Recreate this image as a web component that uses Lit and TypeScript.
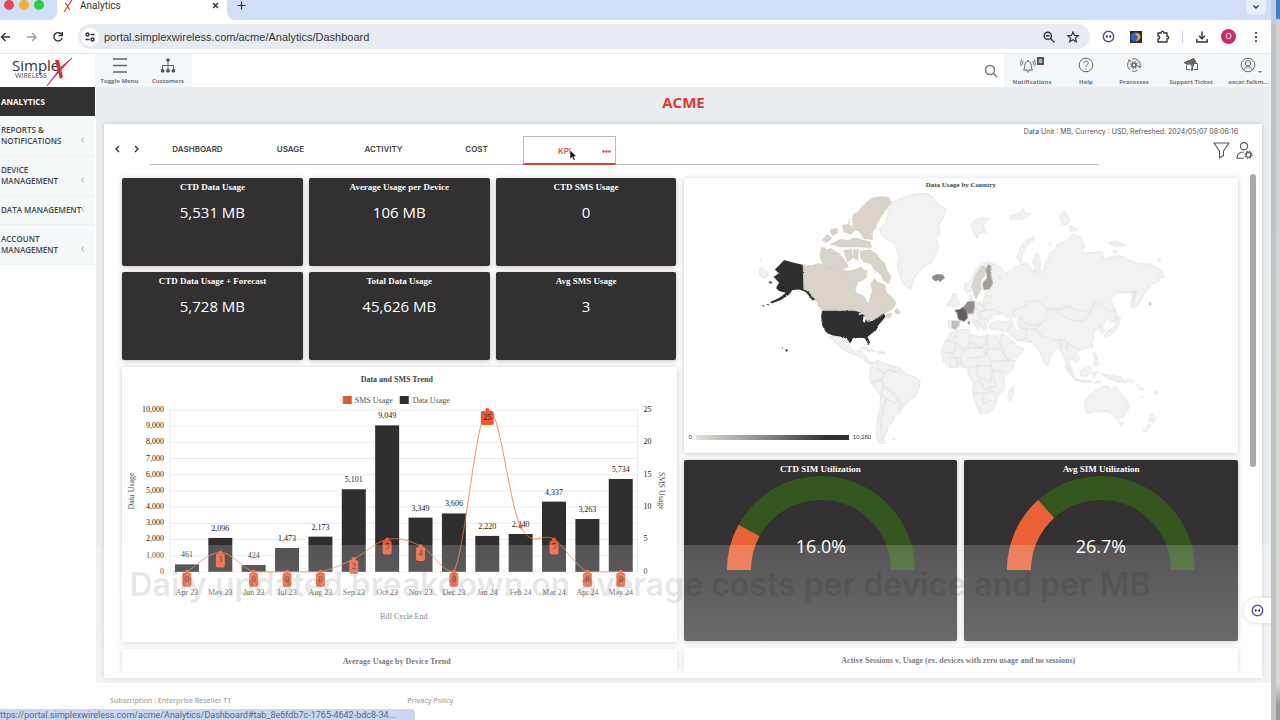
import { LitElement, html, svg, css, TemplateResult } from "lit";
import { customElement, property } from "lit/decorators.js";

interface Cycle {
  label: string;
  data: number;
  sms: number;
  tag: string;
}

const CYCLES: Cycle[] = [
  { label: "Apr 23", data: 461, sms: 0, tag: "0" },
  { label: "May 23", data: 2096, sms: 3, tag: "3" },
  { label: "Jun 23", data: 424, sms: 0, tag: "0" },
  { label: "Jul 23", data: 1473, sms: 0, tag: "0" },
  { label: "Aug 23", data: 2173, sms: 0, tag: "0" },
  { label: "Sep 23", data: 5101, sms: 2, tag: "2" },
  { label: "Oct 23", data: 9049, sms: 5, tag: "5" },
  { label: "Nov 23", data: 3349, sms: 4, tag: "4" },
  { label: "Dec 23", data: 3606, sms: 0, tag: "0" },
  { label: "Jan 24", data: 2220, sms: 25, tag: "25" },
  { label: "Feb 24", data: 2340, sms: 7, tag: "" },
  { label: "Mar 24", data: 4337, sms: 5, tag: "5" },
  { label: "Apr 24", data: 3263, sms: 0, tag: "0" },
  { label: "May 24", data: 5734, sms: 0, tag: "0" },
];

const fmt = (n: number) => n.toLocaleString("en-US");

@customElement("trend-chart")
export class TrendChart extends LitElement {
  static styles = css`
    :host { display: block; }
    svg { display: block; width: 100%; height: auto; }
    text { font-family: "Liberation Serif", serif; font-size: 8px; fill: #222; }
    .soft { fill: #555; }
    .mid { text-anchor: middle; }
    .end { text-anchor: end; }
    .grid { stroke: #ebebeb; stroke-width: 1; }
    .bar { fill: #2f2d2e; }
    .line { fill: none; stroke: #e8764f; stroke-width: 1; stroke-opacity: 0.8; }
    .tag { fill: #e9592f; }
  `;

  private x(i: number) { return 65 + i * 33.4; }
  private y(v: number) { return 182 - v * 0.0162; }

  private curve() {
    const p = CYCLES.map((c, i) => [this.x(i), this.y(c.sms * 400)]);
    let d = `M${p[0][0]},${p[0][1]}`;
    for (let i = 0; i < p.length - 1; i++) {
      const a = p[Math.max(i - 1, 0)];
      const b = p[i];
      const c = p[i + 1];
      const e = p[Math.min(i + 2, p.length - 1)];
      const t = 0.18;
      const y1 = Math.min(182, b[1] + (c[1] - a[1]) * t);
      const y2 = Math.min(182, c[1] - (e[1] - b[1]) * t);
      d += ` C${b[0] + (c[0] - a[0]) * t},${y1} ${c[0] - (e[0] - b[0]) * t},${y2} ${c[0]},${c[1]}`;
    }
    return d;
  }

  render() {
    const ticks = Array.from({ length: 11 }, (_, i) => i * 1000);
    return html`<svg viewBox="0 -3 555 255" role="img" aria-label="Data and SMS Trend">
      <rect class="tag" x="221" y="6" width="9" height="8"></rect>
      <text class="soft" x="233" y="13">SMS Usage</text>
      <rect class="bar" x="278" y="6" width="9" height="8"></rect>
      <text class="soft" x="291" y="13">Data Usage</text>
      ${ticks.map((t) => svg`
        <line class="grid" x1="48" x2="516" y1=${this.y(t)} y2=${this.y(t)}></line>
        <text class="end" x="42" y=${this.y(t) + 2}>${fmt(t)}</text>`)}
      <line class="grid" x1="48" x2="48" y1="20" y2="182"></line>
      <line class="grid" x1="516" x2="516" y1="20" y2="182"></line>
      ${[0, 5, 10, 15, 20, 25].map((t) => svg`<text x="522" y=${this.y(t * 400) + 2}>${t}</text>`)}
      <text class="soft mid" transform="translate(12 101) rotate(-90)">Data Usage</text>
      <text class="soft mid" transform="translate(537 101) rotate(90)">SMS Usage</text>
      ${CYCLES.map((c, i) => svg`
        <rect class="bar" x=${this.x(i) - 12} y=${this.y(c.data)} width="24" height=${182 - this.y(c.data)}></rect>
        <text class="mid" x=${this.x(i)} y=${this.y(c.data) - 7}>${fmt(c.data)}</text>
        <text class="soft mid" x=${this.x(i)} y="205">${c.label}</text>`)}
      <path class="line" d=${this.curve()}></path>
      ${CYCLES.map((c, i) => {
        const w = c.tag.length > 1 ? 13 : 9;
        const x = this.x(i);
        const y = this.y(c.sms * 400);
        return c.tag
          ? svg`<circle class="tag" cx=${x} cy=${y} r="2"></circle>
              <rect class="tag" x=${x - w / 2} y=${y + 1} width=${w} height="14" rx="2"></rect>
              <text class="mid" x=${x} y=${y + 10}>${c.tag}</text>`
          : svg`<circle class="tag" cx=${x} cy=${y} r="2"></circle>`;
      })}
      <text class="soft mid" x="282" y="229">Bill Cycle End</text>
    </svg>`;
  }
}

@customElement("gauge-arc")
export class GaugeArc extends LitElement {
  @property({ type: Number }) value = 0;

  static styles = css`
    :host { display: block; }
    svg { display: block; width: 100%; height: auto; overflow: visible; }
    .rest { fill: none; stroke: #33561f; stroke-width: 24; }
    .part { fill: none; stroke: #ea6236; stroke-width: 24; }
    text { font-family: "Open Sans", sans-serif; font-size: 18px; fill: #fff; text-anchor: middle; }
  `;

  render() {
    const a = (this.value / 100) * Math.PI;
    const x = 137 - 82 * Math.cos(a);
    const y = 94 - 82 * Math.sin(a);
    return html`<svg viewBox="0 2 274 94" role="img" aria-label="Utilization gauge">
      <path class="rest" d="M55,94 A82,82 0 0 1 219,94"></path>
      <path class="part" d="M55,94 A82,82 0 0 1 ${x},${y}"></path>
      <text x="137" y="77">${this.value.toFixed(1)}%</text>
    </svg>`;
  }
}

@customElement("world-map")
export class WorldMap extends LitElement {
  static styles = css`
    :host { display: block; }
    svg { display: block; width: 100%; height: auto; }
    .land { fill: #f2f2f2; stroke: #d9d9d9; stroke-width: 2; stroke-linejoin: round; }
    .edge { fill: none; stroke: #dadada; stroke-width: 2; }
    .low { fill: #d9d3ca; stroke: #c9c3ba; stroke-width: 2; }
    .top { fill: #2f2d2e; }
    .fr { fill: #5f5c5b; }
    .de { fill: #908c89; }
    .fi { fill: #a29d98; }
    .es { fill: #c3beb8; }
    .sea { fill: #fff; }
  `;

  render() {
    return html`<svg viewBox="0 51 1662 783" role="img" aria-label="Data usage by country">
      <defs>
        <filter id="coast" x="0" y="0" width="100%" height="100%">
          <feTurbulence type="fractalNoise" baseFrequency="0.07" numOctaves="2" seed="4"></feTurbulence>
          <feDisplacementMap in="SourceGraphic" scale="7" xChannelSelector="R" yChannelSelector="G"></feDisplacementMap>
        </filter>
      </defs>
      <g filter="url(#coast)">
        <path class="land" d="M622,80L650,68L672,60L700,52L735,54L750,68L760,85L784,98L778,125L762,150L768,170L758,190L762,215L752,240L740,262L715,275L700,290L688,310L680,338L665,332L652,312L645,290L640,265L645,240L632,205L610,190L592,178L585,158L605,140L612,110Z"></path>
        <path class="low" d="M520,110L535,90L560,68L590,62L612,64L620,78L608,98L592,118L578,140L575,155L565,165L562,190L540,188L530,170L512,160L505,135L508,115Z
          M412,215L440,218L462,232L480,250L492,272L470,280L440,276L415,262L408,238Z
          M480,224L502,220L504,246L490,256Z M508,222L523,220L520,252L508,244Z
          M528,225L560,222L580,240L600,260L608,285L620,300L612,322L598,312L590,295L572,282L560,262L540,258L530,245Z
          M415,192L430,176L442,186L425,200Z M438,165L455,155L460,170L445,178Z
          M475,148L495,145L512,162L500,174L480,168Z M492,130L498,140L494,142Z
          M440,204L470,190L490,194L510,186L558,198L560,214L520,212L470,212Z
          M358,270L385,268L405,262L430,272L455,282L490,285L510,282L530,272L545,285L545,305L520,320L512,340L520,352L540,362L552,385L558,368L565,345L560,320L572,308L580,320L600,325L606,350L622,362L635,380L625,398L604,410L580,425L560,432L550,440L540,425L520,408L500,404L415,404L405,390L392,368L378,350L358,340Z
          M630,405L640,396L648,410L638,414Z M606,415L622,412L618,424L608,424Z"></path>
        <path class="top" d="M414,404L512,404L530,410L540,418L550,438L565,434L580,426L596,412L604,422L592,436L582,448L575,462L560,474L550,482L558,500L552,504L542,486L520,484L505,490L498,502L488,488L470,482L445,478L425,468L414,448L411,420Z
          M300,252L330,260L356,266L358,340L372,346L392,368L388,376L365,348L345,340L325,342L315,355L290,372L262,382L262,378L290,362L305,350L285,345L275,335L285,320L268,302L285,292L272,280L290,262Z
          M252,315L265,318L260,324Z M232,389L240,387L240,391Z M246,386L254,383L254,388Z M304,518L312,522L306,528Z M294,514L298,516L295,518Z"></path>
        <path class="sea" d="M538,420L546,424L542,440L536,436Z M522,412L536,410L530,416Z"></path>
        <path class="land" d="M436,480L450,480L472,484L488,492L496,506L500,520L515,528L530,520L534,532L545,540L552,555L565,562L555,562L540,552L520,538L500,532L475,520L460,505L448,495Z
          M530,514L560,519L575,526L550,523Z M580,524L602,530L585,531Z
          M565,560L580,552L600,562L625,568L650,578L665,595L690,602L708,612L704,635L692,662L672,675L658,692L645,712L632,718L628,735L612,748L605,770L598,790L608,806L590,804L578,788L575,760L582,720L588,690L590,655L575,640L555,612L558,590Z
          M624,788L632,788L628,792Z M228,274L250,288L252,300L240,306L226,298Z M229,248L233,252L229,253Z"></path>
        <path class="edge" d="M578,556L582,580L600,590L615,582L618,568M628,570L630,590M645,578L642,590M600,590L590,612L575,612L562,620M590,612L600,632L618,642L634,660L640,674L628,680L606,668L598,690L590,740L592,792M634,660L650,680L640,700L655,694M596,632L592,655L606,668M615,582L642,590"></path>
        <path class="de" d="M745,300L758,294L775,295L782,305L768,317L750,314Z"></path>
        <path class="land" d="M800,375L806,352L814,352L820,372L828,384L815,392L802,390L806,382Z M790,376L798,372L798,388L788,388Z M792,432L800,432L802,456L794,456Z"></path>
        <g transform="translate(828 0)">
          <path class="land" d="M95,262L115,270L130,285L120,304L110,298L122,310L135,290L150,284L175,268L195,262L215,278L228,292L218,252L232,228L240,250L238,290L250,285L256,250L268,262L266,232L285,222L290,205L320,195L340,172L360,185L372,210L362,232L390,230L425,228L430,250L470,238L495,245L530,262L570,265L592,275L612,300L606,308L592,298L596,314L575,325L555,348L535,384L515,396L512,375L528,345L500,350L470,350L448,372L464,395L470,412L465,432L450,438L438,430L425,452L434,462L424,472L414,455L400,462L398,490L392,510L365,520L350,525L345,530L358,548L345,560L330,545L325,560L337,588L322,575L312,545L300,520L290,515L270,540L262,568L252,562L235,520L215,498L190,495L170,492L150,478L140,466L115,460L88,456L90,442L115,434L146,438L150,428L128,412L98,416L90,430L80,440L78,462L68,456L60,442L44,432L62,450L54,462L38,438L20,432L20,414L42,410L45,380L68,378L75,350L95,342L92,300Z
            M118,478L130,475L160,495L168,508L192,518L175,540L140,553L130,525L120,500Z
            M-58,525L-45,495L-30,470L-10,462L25,460L30,475L60,482L78,478L110,480L120,510L130,530L145,554L165,552L158,575L130,605L132,640L110,660L105,690L85,710L60,712L50,690L38,655L40,620L25,600L22,578L5,570L-30,576L-50,555Z
            M148,640L158,630L161,650L150,676L142,665Z
            M14,325L30,315L45,285L62,262L85,255L95,262L80,266L65,272L50,290L38,320L34,345L20,350L12,340Z
            M26,358L36,356L34,374L26,372Z
            M430,480L445,462L462,455L468,430L464,418L480,425L473,450L460,468L436,484Z M516,346L528,348L524,362L516,380Z
            M398,530L406,532L415,565L400,568L405,550Z M360,585L385,568L394,580L380,600L362,600Z M312,568L335,588L348,610L335,602Z M345,610L395,616L372,618L348,613Z M395,590L410,586L400,606Z M400,618L420,616L410,620Z M425,592L450,598L480,602L500,620L470,616L440,606Z M498,608L520,618L512,620Z M528,626L550,640L545,642Z M582,648L592,646L588,654Z M540,658L550,662L546,664Z
            M372,675L385,660L405,645L425,632L440,628L452,645L465,630L474,640L482,655L500,672L505,695L490,722L470,728L450,708L430,705L400,706L380,712L375,695Z M475,738L488,738L482,750Z
            M572,712L586,725L578,740L565,735Z M548,765L565,742L572,748L556,768Z
            M32,140L60,125L88,128L68,145L76,170L58,172L50,186L40,170Z M148,120L180,110L188,98L194,112L210,115L185,130L150,128Z M298,118L312,108L328,130L322,145L305,145Z M328,148L350,162L330,165Z M222,183L195,195L180,215L170,245L182,262L185,235L200,208L222,190Z M445,202L465,195L495,208L470,210Z M460,222L472,228L462,232Z M590,250L600,248L598,254Z M268,200L272,206L266,206Z M394,505L398,512L394,516Z"></path>
          <path class="edge" d="M155,402L165,425L185,430L200,448L230,445L245,440L262,420L262,396L232,374L195,378L198,392L155,402M262,396L300,400L318,390L345,402L392,406L372,434L335,434L295,412L290,402M392,406L400,382L420,384L440,402L465,405M245,440L228,460L245,480L280,492L302,490L320,500L318,520M170,430L178,455L200,460L228,460M140,466L155,440L178,455L200,460L196,485L170,492M196,485L215,498M320,500L345,515L360,520M300,520L302,490M120,460L130,475M48,380L70,390L90,375M42,395L60,405L95,400L125,412M60,405L55,425L90,430M70,390L72,405M75,360L95,358M408,445L425,452"></path>
          <path class="edge" d="M-30,505L-45,520L-55,522M-45,495L-15,498L10,520L25,515L30,475M-15,498L-18,530L-45,530M10,520L0,545L-20,545L-18,530M0,545L5,570M25,515L68,515L78,535L82,500L78,480M30,500L68,515M22,545L50,545L78,535L95,555L145,554M22,578L50,568L92,570L95,555M50,568L52,600L92,618L96,580L130,590M40,620L60,615L70,640L105,630L100,600M38,650L85,652L90,640L108,655M68,655L70,682L90,672L102,680M60,712L55,690M68,515L78,480M-10,462L-12,480L-42,495M82,518L120,518M-30,530L-30,576M-10,545L-8,572"></path>
          <path class="low" d="M40,350L38,320L50,290L65,272L76,274L72,300L60,315L62,340L46,368Z"></path>
          <path class="fi" d="M82,265L92,268L92,300L98,320L88,340L70,342L66,322L80,305L76,280Z"></path>
          <path class="fr" d="M-18,402L-2,400L8,392L20,404L22,425L10,437L-6,430L-10,412Z"></path>
          <path class="de" d="M12,388L24,376L42,374L43,392L38,413L24,412L10,396Z"></path>
          <path class="es" d="M-26,433L0,435L-4,450L-16,461L-26,456Z"></path>
          <path class="sea" d="M156,422L172,424L168,440L180,462L165,458L158,438Z"></path>
          <path class="fr" d="M24,436L28,436L27,446L24,446Z M566,382L572,384L568,388Z"></path>
        </g>
      </g>
    </svg>`;
  }
}

const ico = (w: number, box: string, body: TemplateResult | unknown) =>
  html`<svg class="ico" width=${w} viewBox=${box} aria-hidden="true">${body}</svg>`;

const face = ico(13, "0 0 13 13", svg`<circle cx="6.5" cy="6.5" r="5.2" fill="#fff" stroke="#5b4fb5" stroke-width="1.5"/><ellipse cx="4.8" cy="6.5" rx=".9" ry="1.2" fill="#222" stroke="none"/><ellipse cx="8.2" cy="6.5" rx=".9" ry="1.2" fill="#222" stroke="none"/>`);

@customElement("app-root")
export class AppRoot extends LitElement {
  static styles = css`
    :host { display: block; font-family: "Open Sans", sans-serif; color: #444; }
    * { box-sizing: border-box; }
    button { border: 0; padding: 0; background: none; font: inherit; color: inherit; cursor: pointer; }
    a { color: inherit; text-decoration: none; }
    h1, h2, h3, p { margin: 0; }
    .ico { display: block; flex: none; overflow: visible; fill: none; stroke: #333; stroke-width: 1.4; }
    .desktop { height: 100vh; display: grid; grid-template-columns: 1fr 5px 4px; overflow: hidden; }
    .behind { background: linear-gradient(#c3cfdd 0 18px, #c2c3c5 30px); }
    .far { background: linear-gradient(#3f7fc4 0 18px, #cfd1d2 20px 80px, #d8d8d4 60% 95%, #999 98%); }
    .window { display: flex; flex-direction: column; min-width: 0; background: #fff; position: relative; overflow: hidden; }

    .strip { display: flex; height: 20px; background: #cfdff9; flex: none; }
    .lead { background: #fff; }
    .lights { display: flex; gap: 5px; width: 57px; height: 20px; padding-left: 4px; background: #cfdff9; border-radius: 0 0 8px 0; }
    .light { width: 10px; height: 10px; border-radius: 50%; background: #ee4256; }
    .light.y { background: #f2b32e; }
    .light.g { background: #27ce40; }
    .tab { width: 170px; background: #fff; display: flex; align-items: center; gap: 7px; padding: 0 8px 9px 6px; font: 10px/11px Roboto, sans-serif; color: #333; }
    .tab span { flex: 1; }
    .rest { flex: 1; display: flex; background: #fff; }
    .fill { flex: 1; display: flex; justify-content: space-between; padding: 0 5px 5px 10px; background: #cfdff9; border-radius: 0 0 0 8px; }
    .fill button { align-self: start; }
    .chev { width: 20px; height: 15px; display: grid; place-items: center; border-radius: 0 0 5px 5px; background: #e7effc; }

    .bar { display: flex; align-items: center; height: 34px; padding-right: 2px; border-bottom: 1px solid #e3e6e9; flex: none; }
    .nav { display: grid; grid-template-columns: 19px 26px 33px; align-items: center; }
    .nav button:not(:first-child) { padding-left: 7px; }
    .omni { flex: 1; display: flex; align-items: center; height: 25px; border-radius: 13px; background: #e7ebf3; padding: 0 11px 0 3px; gap: 12px; }
    .site { width: 18px; height: 18px; border-radius: 50%; background: #fff; display: grid; place-items: center; }
    .omni input { flex: 1; min-width: 0; margin-left: -7px; padding: 0; border: 0; background: none; outline: 0; font: 11px/16px "Liberation Sans", sans-serif; color: #33363b; }
    .tools { display: grid; grid-template-columns: 27px 27px 27px 12px 27px 27px 27px; padding-left: 5px; justify-items: center; align-items: center; }
    .sep { width: 1px; height: 12px; background: #c9d3e4; }
    .me { width: 15px; height: 15px; border-radius: 50%; background: #d0266b; color: #fff; font: 8px/15px Inter, sans-serif; text-align: center; }

    .head { display: flex; height: 33px; flex: none; background: #fff; }
    .brand { width: 95px; padding: 1px 0 0 12px; }
    .brand svg { display: block; }
    .word { font: 15px "Open Sans", sans-serif; fill: #333; }
    .sub { font: 7px "Open Sans", sans-serif; fill: #444; }
    .left { display: grid; grid-template-columns: 49px 48px; background: #f4f7f9; }
    .right { display: grid; grid-template-columns: 56px 52px 44px 70px 45px; background: #f4f7f9; }
    .item { display: flex; flex-direction: column; align-items: center; justify-content: space-between; padding: 3px 0 2px; font: 700 6px/8px "Open Sans", sans-serif; color: #777; white-space: nowrap; position: relative; }
    .item .ico { stroke: #666; stroke-width: 1; }
    .right .item { padding-bottom: 1px; }
    .count { position: absolute; left: 33px; top: 3px; width: 7px; height: 8px; background: #555; color: #fff; font: 700 5px/8px "Open Sans", sans-serif; text-align: center; }
    .caret { position: absolute; right: 9px; top: 17px; border: 2px solid transparent; border-top-color: #777; border-bottom: 0; }
    .find { margin-left: auto; padding: 0 6px; }
    .find .ico { stroke: #777; }

    .body { flex: 1; display: flex; min-height: 0; }
    .side { width: 95px; flex: none; display: flex; flex-direction: column; }
    .side a { display: flex; align-items: center; justify-content: space-between; padding: 8px 11px 9px 1px; font: 600 8px/11px "Open Sans", sans-serif; color: #444; background: #f6f9fa; border-bottom: 1px solid #eef2f4; white-space: nowrap; }
    .side a.on { height: 29px; background: #323031; color: #fff; border: 0; font-weight: 700; }
    .side .ico { align-self: end; margin-bottom: 3px; }
    .page { flex: 1; min-width: 0; display: flex; flex-direction: column; margin-left: 1px; background: #ebeef1; }
    .name { padding: 3px 0 10px; font: 700 15px/24px "Open Sans", sans-serif; color: #e0392e; text-align: center; }
    .panel { flex: 1; min-height: 0; display: flex; flex-direction: column; margin: 0 9px 5px 8px; padding-bottom: 7px; background: #fff; box-shadow: 0 0 4px rgba(0, 0, 0, 0.18); }
    .meta { padding: 3px 24px 0 0; text-align: right; font: 7px/9px Inter, sans-serif; color: #555; }
    .tabs { display: flex; padding: 0 9px 0 8px; height: 29px; }
    .step { width: 19px; display: grid; place-items: center start; padding: 0 0 3px 3px; }
    .list { flex: 1; display: flex; margin: 0 114px 0 0; padding-left: 1px; border-bottom: 1px solid #bbb; }
    .list button { width: 93px; font: 600 8px/10px Inter, sans-serif; color: #444; padding-bottom: 3px; }
    .list button.on { display: grid; grid-template-columns: 1fr auto; align-items: center; padding: 2px 4px 0 3px; border: 1px solid #bbb; border-bottom: 2px solid #d8433c; margin-bottom: -1px; color: #d8534d; }
    .acts { display: flex; gap: 6px; align-items: center; }
    .acts .ico { stroke: #555; stroke-width: 1.1; }

    .view { flex: 1; min-height: 0; display: flex; margin-top: 7px; padding: 0 6px 0 18px; gap: 12px; }
    .scroll { flex: 1; min-width: 0; overflow: hidden; margin: 0 -6px; padding: 6px; }
    .cols { display: grid; grid-template-columns: 1fr 1fr; gap: 7px; }
    .col { display: flex; flex-direction: column; gap: 7px; min-width: 0; }
    .kpis { display: grid; grid-template-columns: repeat(3, 1fr); gap: 6px; }
    .kpi, .gauge { background: #323031; color: #fff; border-radius: 2px; box-shadow: 0 1px 5px rgba(80, 60, 70, 0.35); text-align: center; }
    .kpi { height: 88px; }
    .kpi h3, .gauge h3 { font: 700 9px/18px "Liberation Serif", serif; }
    .kpi p { font: 15px/20px "Open Sans", sans-serif; padding-top: 6px; }
    .card { background: #fff; box-shadow: 0 1px 5px rgba(80, 60, 70, 0.3); }
    .card h3 { font: 700 8px/15px "Liberation Serif", serif; color: #444; text-align: center; padding-right: 5px; }
    .chart { padding-top: 5px; height: 275px; }
    .map { position: relative; height: 275px; overflow: hidden; }
    .map h3 { font-size: 7px; padding: 0; }
    .scale { position: absolute; left: 5px; bottom: 12px; display: flex; align-items: center; gap: 4px; font: 6px/8px "Liberation Sans", sans-serif; color: #333; }
    .ramp { width: 153px; height: 5px; background: linear-gradient(90deg, #e5dfd5, #8c8886 45%, #323031 85%); }
    .gauges { display: grid; grid-template-columns: 1fr 1fr; gap: 7px; }
    .gauge { height: 181px; }
    .next { height: 60px; padding-top: 5px; }
    .thumb { width: 6px; height: 293px; border-radius: 3px; background: #a9a9a9; margin: 2px 0 0; }
    .foot { display: flex; gap: 176px; height: 37px; padding: 13px 14px; background: #fff; font: 600 7px/9px "Open Sans", sans-serif; color: #777; }

    .caption { position: absolute; left: 0; right: 0; bottom: 0; height: 175px; padding: 16px 0 0 9px; background: linear-gradient(rgba(255, 255, 255, 0.18), rgba(255, 255, 255, 0.36)); font: 600 32px/48px Inter, sans-serif; color: rgba(0, 0, 0, 0.11); text-align: center; white-space: nowrap; pointer-events: none; }
    .status { position: absolute; left: 0; bottom: 0; height: 11px; width: 415px; border-radius: 0 4px 0 0; background: #c9d7f1; font: 9px/12px Roboto, sans-serif; color: #5d6780; white-space: nowrap; }
    .bot { position: absolute; right: 0; top: 598px; width: 27px; height: 25px; display: grid; place-items: center; background: #fff; border-radius: 12px 0 0 12px; box-shadow: 0 0 4px rgba(0, 0, 0, 0.15); }
    .cursor { position: absolute; left: 569px; top: 149px; }
  `;

  private kpi(title: string, value: string) {
    return html`<section class="kpi"><h3>${title}</h3><p>${value}</p></section>`;
  }

  private link(lines: string[]) {
    return html`<a href="#">
      <span>${lines.map((l, i) => (i ? html`<br />${l}` : l))}</span>
      ${ico(3, "0 0 3 6", svg`<path d="M2.5,.5L.7,3L2.5,5.5" stroke-width=".7" stroke="#888"/>`)}
    </a>`;
  }

  render() {
    return html`
      <div class="desktop">
        <div class="window">
          <div class="strip">
            <div class="lead"><div class="lights"><i class="light"></i><i class="light y"></i><i class="light g"></i></div></div>
            <div class="tab">${ico(10, "0 0 10 12", svg`<path d="M9,0L1,12M2,3C4,4 6,9 6.5,10" stroke="#d9403a" stroke-width="1.2"/>`)}<span>Analytics</span>
              <button aria-label="Close tab">${ico(7, "0 0 7 7", svg`<path d="M1,1L6,6M6,1L1,6"/>`)}</button></div>
            <div class="rest"><div class="fill">
              <button aria-label="New tab">${ico(9, "0 0 9 12", svg`<path d="M4.5,1.5V9.5M.5,5.5H8.5" stroke-width="1.2"/>`)}</button>
              <button class="chev" aria-label="Search tabs">${ico(8, "0 0 8 10", svg`<path d="M1.5,2.5L4,5L6.5,2.5"/>`)}</button>
            </div></div>
          </div>

          <div class="bar">
            <div class="nav">
              <button aria-label="Back">${ico(12, "0 0 12 12", svg`<path d="M10,6H2M5.5,2L1.5,6L5.5,10"/>`)}</button>
              <button aria-label="Forward">${ico(12, "0 0 12 12", svg`<path d="M1,6H9M6,2L10,6L6,10" stroke="#999"/>`)}</button>
              <button aria-label="Reload">${ico(12, "0 0 12 12", svg`<path d="M10,4.2A4.2,4.2 0 1 0 10.2,6.8M10.3,1V4.6H6.7"/>`)}</button>
            </div>
            <div class="omni">
              <span class="site">${ico(10, "0 0 10 10", svg`<path d="M5.5,2.5H9.5M.5,7.5H4.5"/><circle cx="2.5" cy="2.5" r="1.5"/><circle cx="7.5" cy="7.5" r="1.5"/>`)}</span>
              <input aria-label="Address" value="portal.simplexwireless.com/acme/Analytics/Dashboard" />
              <button aria-label="Zoom">${ico(12, "0 0 12 12", svg`<circle cx="4.8" cy="4.8" r="3.6"/><path d="M7.5,7.5L11.3,11.3M3,4.8H6.6"/>`)}</button>
              <button aria-label="Bookmark">${ico(12, "0 0 12 12", svg`<path d="M6,1L7.5,4.4L11.2,4.7L8.4,7.1L9.3,10.8L6,8.8L2.7,10.8L3.6,7.1L.8,4.7L4.5,4.4Z" stroke-width="1.2"/>`)}</button>
            </div>
            <div class="tools">
              <button aria-label="Assistant">${face}</button>
              <button aria-label="Extension">${ico(12, "0 0 12 12", svg`<rect width="12" height="12" fill="#2b2a25" stroke="none"/><circle cx="5" cy="6" r="4.5" fill="#2d62c8" stroke="none"/><path d="M5,3C8,0 12,4 10,8L6,11L8,6Z" fill="#e9a53a" stroke="none"/>`)}</button>
              <button aria-label="Extensions">${ico(14, "0 0 14 14", svg`<path d="M2,3H5.2C5.2,.8 8,.8 8,3H11V6.2C13.2,6.2 13.2,9 11,9V12H2V9C4.2,9 4.2,6 2,6Z" stroke-linejoin="round"/>`)}</button>
              <i class="sep"></i>
              <button aria-label="Downloads">${ico(12, "0 0 12 12", svg`<path d="M6,.5V7.5M3,4.8L6,7.8L9,4.8M.8,8V11H11.2V8"/>`)}</button>
              <button class="me" aria-label="Profile">O</button>
              <button aria-label="Menu">${ico(4, "0 0 4 12", svg`<path d="M2,1V2.8M2,5.1V6.9M2,9.2V11" stroke-width="1.8"/>`)}</button>
            </div>
          </div>

          <header class="head">
            <a class="brand" href="#" aria-label="Simplex Wireless">
              <svg width="62" height="31" viewBox="0 0 62 31">
                <text class="word" x="0" y="16">Simple</text>
                <text class="sub" x="3" y="23">WIRELESS</text>
                <path d="M60,3L46,18L35,31L49,12Z" fill="#d2323a" stroke="#d2323a" stroke-width=".8"/>
                <path d="M43,5L47,5L51,22L48,24Z" fill="#d2323a"/>
              </svg>
            </a>
            <div class="left">
              <button class="item">${ico(16, "0 0 16 16", svg`<path d="M1,2H15M1,8.5H15M1,15H15" stroke-width="1.3"/>`)}Toggle Menu</button>
              <button class="item">${ico(16, "0 0 16 16", svg`<path d="M8,4V12M2.5,12V8.5H13.5V12"/><g fill="#555" stroke="none"><circle cx="8" cy="3" r="1.8"/><rect x="1" y="12" width="3.4" height="3.4" rx="1"/><rect x="6.3" y="12" width="3.4" height="3.4" rx="1"/><rect x="11.6" y="12" width="3.4" height="3.4" rx="1"/></g>`)}Customers</button>
            </div>
            <button class="find" aria-label="Search">${ico(14, "0 0 14 14", svg`<circle cx="6" cy="6" r="4.5"/><path d="M9.3,9.3L13,13"/>`)}</button>
            <div class="right">
              <button class="item">${ico(16, "5 0 16 16", svg`<path d="M4.5,12H13.5C12,10.5 12.5,8 12,6C11.5,4 10,3.3 9,3.3C8,3.3 6.5,4 6,6C5.5,8 6,10.5 4.5,12ZM7.5,12.5C8,14.5 10,14.5 10.5,12.5M9,2V3.3M4.5,3C3.5,4 3.5,5.5 3.7,6.5M2.8,1.5C1.5,3.5 1.5,6 2.3,8M13.5,3C14.5,4 14.5,5.5 14.3,6.5M15.2,1.5C16.5,3.5 16.5,6 15.7,8" transform="translate(0 1)"/>`)}Notifications<i class="count">0</i></button>
              <button class="item">${ico(16, "0 0 16 16", svg`<circle cx="8" cy="8" r="6.8"/><path d="M5.8,6.2C5.8,3.3 10.2,3.3 10.2,6.2C10.2,7.8 8,8 8,10M8,11.3V12.3"/>`)}Help</button>
              <button class="item">${ico(16, "0 0 16 16", svg`<path d="M4,13A6.3,6.3 0 0 1 3.5,3.5M2,3.2L4,3L4.2,5.2M6.5,1.9A6.3,6.3 0 0 1 13.8,10.5M15.3,9.3L13.6,10.8L12.3,9M11.5,13.3A6.3,6.3 0 0 1 6,14"/><circle cx="8" cy="8" r="2" stroke-width="1.6"/><circle cx="8" cy="8" r="3.4" stroke-width="1.2" stroke-dasharray="1.3 1.37"/>`)}Processes</button>
              <button class="item">${ico(16, "0 0 16 16", svg`<path d="M1,5.5L11,1.5L13,5.5L4,7.5Z" fill="#666"/><path d="M3.5,8.5V12.5H7M10.5,12.5H14.5V6.5H8"/><path d="M7,6L9.5,9L8.8,14M10.5,7L9.5,9" stroke-width="1.8"/>`)}Support Ticket</button>
              <button class="item">${ico(16, "1 0 16 16", svg`<circle cx="8" cy="8" r="6.8"/><circle cx="8" cy="6.3" r="2.7"/><path d="M3.5,13C4,10.5 6,9.8 8,9.8C10,9.8 12,10.5 12.5,13"/>`)}oscar.falkm...<i class="caret"></i></button>
            </div>
          </header>

          <div class="body">
            <nav class="side">
              <a class="on" href="#">ANALYTICS</a>
              ${this.link(["REPORTS &", "NOTIFICATIONS"])}
              ${this.link(["DEVICE", "MANAGEMENT"])}
              ${this.link(["DATA MANAGEMENT"])}
              ${this.link(["ACCOUNT", "MANAGEMENT"])}
            </nav>
            <main class="page">
              <h1 class="name">ACME</h1>
              <div class="panel">
                <p class="meta">Data Unit : MB, Currency : USD, Refreshed: 2024/05/07 08:06:16</p>
                <div class="tabs">
                  <button class="step" aria-label="Previous">${ico(5, "0 0 5 8", svg`<path d="M4,1L1,4L4,7"/>`)}</button>
                  <button class="step" aria-label="Next">${ico(5, "0 0 5 8", svg`<path d="M1,1L4,4L1,7"/>`)}</button>
                  <div class="list" role="tablist">
                    <button role="tab">DASHBOARD</button>
                    <button role="tab">USAGE</button>
                    <button role="tab">ACTIVITY</button>
                    <button role="tab">COST</button>
                    <button role="tab" class="on" aria-selected="true"><span>KPI</span>${ico(9, "0 0 9 3", svg`<g fill="#d8433c" stroke="none"><circle cx="1.5" cy="1.5" r="1.2"/><circle cx="4.5" cy="1.5" r="1.2"/><circle cx="7.5" cy="1.5" r="1.2"/></g>`)}</button>
                  </div>
                  <div class="acts">
                    <button aria-label="Filter">${ico(17, "0 0 17 17", svg`<path d="M1,1H16L10.5,9V13.5L6.5,16V9Z" stroke-linejoin="round"/>`)}</button>
                    <button aria-label="User settings">${ico(17, "0 0 17 17", svg`<circle cx="8" cy="4.2" r="3.6"/><path d="M8,16.3H1C1,12 3,10 8,10"/><circle cx="12.5" cy="12.8" r="2.4"/><circle cx="12.5" cy="12.8" r="3.4" stroke-dasharray="1.4 1.27" stroke-width="1.3"/>`)}</button>
                  </div>
                </div>
                <div class="view">
                  <div class="scroll">
                    <div class="cols">
                      <div class="col">
                        <div class="kpis">
                          ${this.kpi("CTD Data Usage", "5,531 MB")}
                          ${this.kpi("Average Usage per Device", "106 MB")}
                          ${this.kpi("CTD SMS Usage", "0")}
                          ${this.kpi("CTD Data Usage + Forecast", "5,728 MB")}
                          ${this.kpi("Total Data Usage", "45,626 MB")}
                          ${this.kpi("Avg SMS Usage", "3")}
                        </div>
                        <section class="card chart"><h3>Data and SMS Trend</h3><trend-chart></trend-chart></section>
                        <section class="card next"><h3>Average Usage by Device Trend</h3></section>
                      </div>
                      <div class="col">
                        <section class="card map">
                          <h3>Data Usage by Country</h3>
                          <world-map></world-map>
                          <div class="scale"><span>0</span><i class="ramp"></i><span>10,280</span></div>
                        </section>
                        <div class="gauges">
                          <section class="gauge"><h3>CTD SIM Utilization</h3><gauge-arc .value=${16}></gauge-arc></section>
                          <section class="gauge"><h3>Avg SIM Utilization</h3><gauge-arc .value=${26.7}></gauge-arc></section>
                        </div>
                        <section class="card next"><h3>Active Sessions v. Usage (ex. devices with zero usage and no sessions)</h3></section>
                      </div>
                    </div>
                  </div>
                  <div class="thumb"></div>
                </div>
              </div>
              <footer class="foot"><span>Subscription : Enterprise Reseller T1</span><a href="#">Privacy Policy</a></footer>
            </main>
          </div>

          <p class="caption">Daily updated breakdown on average costs per device and per MB</p>
          <div class="status">ttps://portal.simplexwireless.com/acme/Analytics/Dashboard#tab_8e6fdb7c-1765-4642-bdc8-34...</div>
          <button class="bot" aria-label="Open assistant">${face}</button>
          <svg class="cursor" width="9" height="13" viewBox="0 0 9 13" aria-hidden="true"><path d="M1,1V10L3.2,8L4.7,11.5L6.3,10.8L4.8,7.4H7.6Z" fill="#000" stroke="#fff" stroke-width=".7"/></svg>
        </div>
        <div class="behind"></div>
        <div class="far"></div>
      </div>
    `;
  }
}
